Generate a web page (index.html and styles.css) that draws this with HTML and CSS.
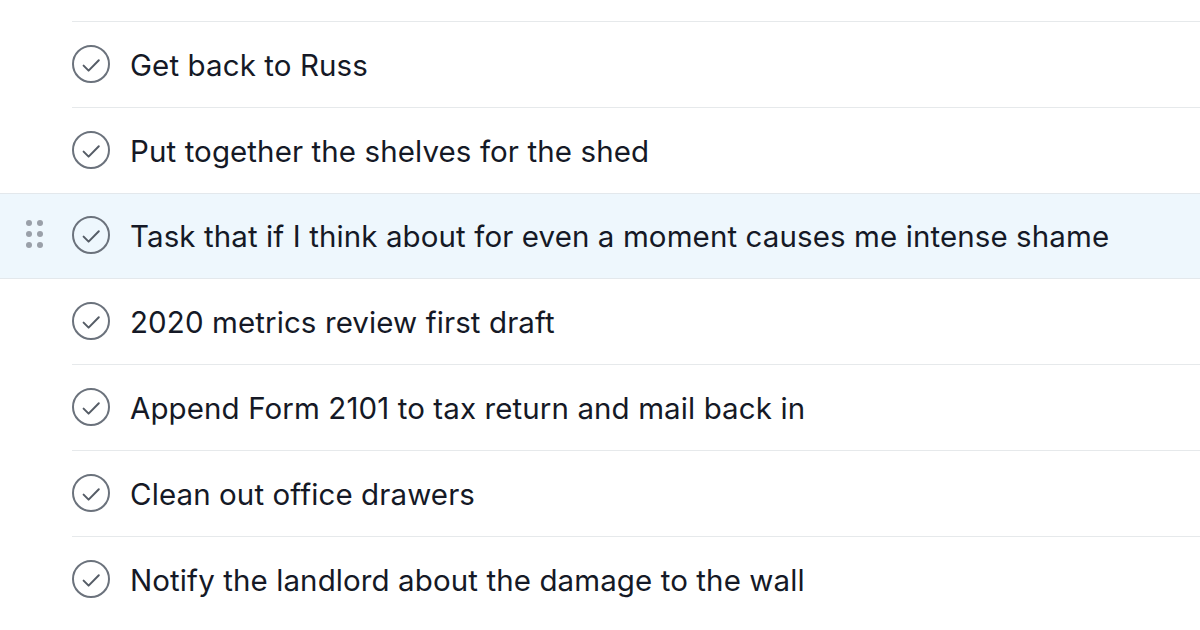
FILE: index.html
```html
<!DOCTYPE html>
<html>
<head>
<meta charset="utf-8">
<link rel="stylesheet" href="styles.css">
</head>
<body>
<div class="list">
  <div class="row first"><div class="inner"><span class="check"><svg viewBox="0 0 38 38" width="38" height="38"><circle cx="19" cy="19" r="18" fill="none" stroke="#6b727c" stroke-width="2"/><path d="M11.6 20.6 L16.6 25.6 L26.8 15.2" fill="none" stroke="#555c66" stroke-width="2" stroke-linecap="round" stroke-linejoin="round"/></svg></span><span class="label">Get back to Russ</span></div></div>
  <div class="row"><div class="inner"><span class="check"><svg viewBox="0 0 38 38" width="38" height="38"><circle cx="19" cy="19" r="18" fill="none" stroke="#6b727c" stroke-width="2"/><path d="M11.6 20.6 L16.6 25.6 L26.8 15.2" fill="none" stroke="#555c66" stroke-width="2" stroke-linecap="round" stroke-linejoin="round"/></svg></span><span class="label">Put together the shelves for the shed</span></div></div>
  <div class="row active"><span class="handle"><i></i><i></i><i></i><i></i><i></i><i></i></span><div class="inner"><span class="check"><svg viewBox="0 0 38 38" width="38" height="38"><circle cx="19" cy="19" r="18" fill="none" stroke="#6b727c" stroke-width="2"/><path d="M11.6 20.6 L16.6 25.6 L26.8 15.2" fill="none" stroke="#555c66" stroke-width="2" stroke-linecap="round" stroke-linejoin="round"/></svg></span><span class="label">Task that if I think about for even a moment causes me intense shame</span></div></div>
  <div class="row"><div class="inner"><span class="check"><svg viewBox="0 0 38 38" width="38" height="38"><circle cx="19" cy="19" r="18" fill="none" stroke="#6b727c" stroke-width="2"/><path d="M11.6 20.6 L16.6 25.6 L26.8 15.2" fill="none" stroke="#555c66" stroke-width="2" stroke-linecap="round" stroke-linejoin="round"/></svg></span><span class="label">2020 metrics review first draft</span></div></div>
  <div class="row"><div class="inner"><span class="check"><svg viewBox="0 0 38 38" width="38" height="38"><circle cx="19" cy="19" r="18" fill="none" stroke="#6b727c" stroke-width="2"/><path d="M11.6 20.6 L16.6 25.6 L26.8 15.2" fill="none" stroke="#555c66" stroke-width="2" stroke-linecap="round" stroke-linejoin="round"/></svg></span><span class="label">Append Form 2101 to tax return and mail back in</span></div></div>
  <div class="row"><div class="inner"><span class="check"><svg viewBox="0 0 38 38" width="38" height="38"><circle cx="19" cy="19" r="18" fill="none" stroke="#6b727c" stroke-width="2"/><path d="M11.6 20.6 L16.6 25.6 L26.8 15.2" fill="none" stroke="#555c66" stroke-width="2" stroke-linecap="round" stroke-linejoin="round"/></svg></span><span class="label">Clean out office drawers</span></div></div>
  <div class="row last"><div class="inner"><span class="check"><svg viewBox="0 0 38 38" width="38" height="38"><circle cx="19" cy="19" r="18" fill="none" stroke="#6b727c" stroke-width="2"/><path d="M11.6 20.6 L16.6 25.6 L26.8 15.2" fill="none" stroke="#555c66" stroke-width="2" stroke-linecap="round" stroke-linejoin="round"/></svg></span><span class="label">Notify the landlord about the damage to the wall</span></div></div>
</div>
</body>
</html>
```
FILE: styles.css
```css
html, body {
  margin: 0;
  padding: 0;
  background: #ffffff;
}
body {
  width: 1200px;
  height: 630px;
  overflow: hidden;
  font-family: Inter, "Noto Sans", sans-serif;
  color: #151926;
}
.list {
  padding-top: 21px;
}
.row {
  position: relative;
  padding-left: 72px;
}
.inner {
  display: flex;
  align-items: center;
  height: 85px;
  border-bottom: 1px solid #e6e9eb;
}
.row.first .inner {
  border-top: 1px solid #e6e9eb;
}
.row.last .inner {
  border-bottom: none;
}
.row.active {
  margin-top: -1px;
  background: #eef7fd;
  border-top: 1px solid #e3e8ec;
  border-bottom: 1px solid #e3e8ec;
}
.row.active .inner {
  height: 84px;
  border-bottom: none;
}
.check {
  display: flex;
  width: 38px;
  height: 38px;
  margin-top: -2px;
  flex: none;
}
.label {
  margin-left: 20px;
  font-size: 29.5px;
  letter-spacing: 0.1px;
  white-space: nowrap;
}
.handle {
  position: absolute;
  left: 26px;
  top: 26px;
  display: grid;
  grid-template-columns: 6px 6px;
  column-gap: 5px;
  row-gap: 5px;
}
.handle i {
  display: block;
  width: 6px;
  height: 6px;
  border-radius: 50%;
  background: #9aa0a9;
}
```
